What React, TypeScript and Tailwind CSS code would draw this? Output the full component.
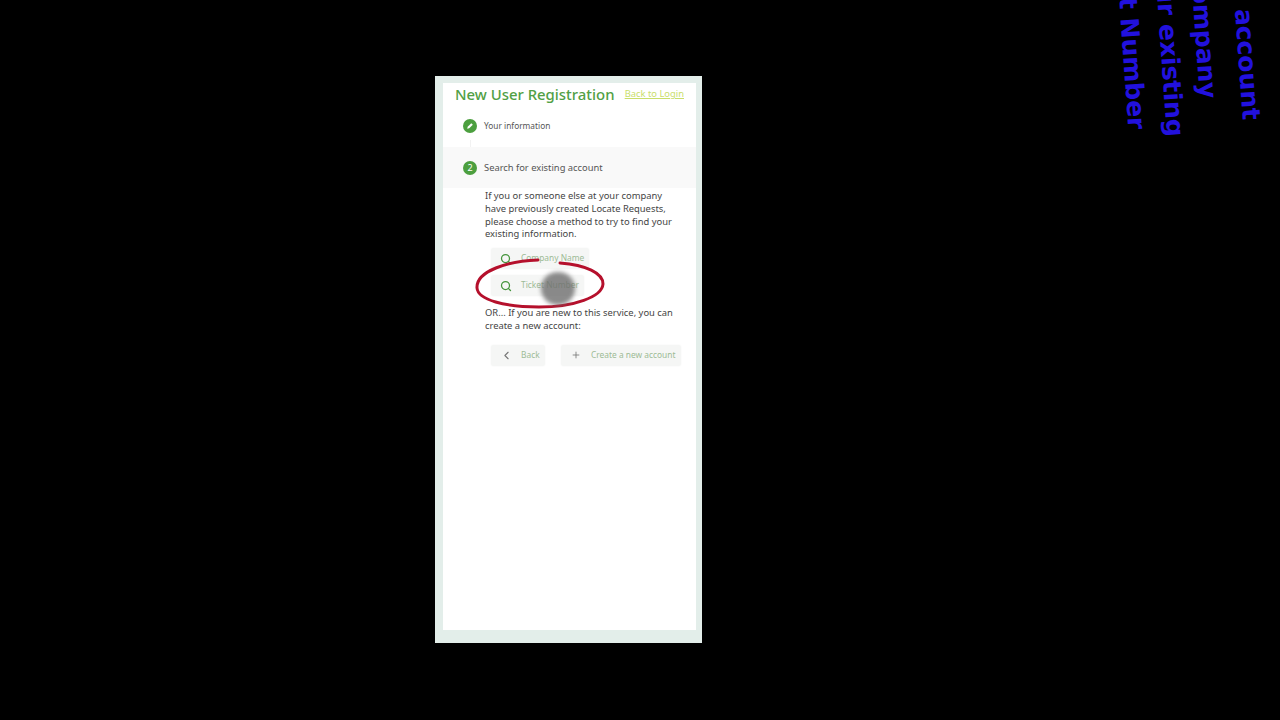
import { ChevronLeft, Plus, Search } from "lucide-react";

function ActionButton({ icon, label, className }: { icon: React.ReactNode; label: string; className: string }) {
  return (
    <div className={`flex h-[21px] shrink-0 items-center whitespace-nowrap rounded-[3px] bg-[#f5f6f5] text-[8.4px] text-[#9dbb95] shadow-[0_0_2px_rgba(0,0,0,0.06)] ${className}`}>
      <span className="flex w-[30px] shrink-0 justify-center text-[#45953c]">{icon}</span>
      <span>{label}</span>
    </div>
  );
}

const caption = "absolute origin-top-left rotate-[86deg] whitespace-nowrap font-['DejaVu_Sans',sans-serif] text-[25px] font-bold leading-none text-[#2211dd]";

export default function App() {
  return (
    <div className="relative h-[720px] w-[1280px] overflow-hidden bg-black font-['Noto_Sans','Open_Sans',sans-serif]">
      <div className="ml-[435px] pt-[76px]">
        <div className="h-[567px] w-[267px] bg-[#e3eeea] pb-[13px] pl-[8px] pr-[6px] pt-[7px]">
          <div className="h-full bg-white">
            <div className="flex items-center justify-between px-[12px]">
              <h1 className="text-[14.9px] font-medium leading-[23px] text-[#51a045]">New User Registration</h1>
              <a className="text-[9.4px] text-[#c9de6a] underline">Back to Login</a>
            </div>

            <div className="mt-[6px] flex h-[28px] items-center gap-[7px] pl-[20px]">
              <span className="flex h-[14px] w-[14px] items-center justify-center rounded-full bg-[#4c9f3f]">
                <svg viewBox="0 0 14 14" className="h-[14px] w-[14px]">
                  <path d="M4.2 9.8l.5-2 3.6-3.6 1.5 1.5-3.6 3.6z" fill="#fff" />
                </svg>
              </span>
              <span className="text-[8.3px] text-[#555]">Your information</span>
            </div>
            <div className="ml-[27px] h-[7px] w-px bg-[#f2f2f2]" />

            <div className="flex h-[41px] items-center gap-[7px] bg-[#f9f9f9] pl-[20px] pt-[1px]">
              <span className="flex h-[14px] w-[14px] items-center justify-center rounded-full bg-[#4c9f3f] text-[9px] text-white">2</span>
              <span className="text-[9.35px] text-[#555]">Search for existing account</span>
            </div>

            <div className="pl-[42px] pr-[20px] pt-[2px] text-[9.4px] leading-[12.8px] text-[#444]">
              <p>If you or someone else at your company have previously created Locate Requests, please choose a method to try to find your existing information.</p>
              <div className="mt-[7px] flex flex-col items-start gap-[6px] pl-[6px]">
                <ActionButton className="w-[98px]" icon={<Search size={12} strokeWidth={2.5} />} label="Company Name" />
                <ActionButton className="w-[93px]" icon={<Search size={12} strokeWidth={2.5} />} label="Ticket Number" />
              </div>
              <p className="mt-[11px]">OR... If you are new to this service, you can create a new account:</p>
              <div className="mt-[12px] flex gap-[16px] pl-[6px]">
                <ActionButton className="w-[54px]" icon={<ChevronLeft size={13} className="text-[#777]" />} label="Back" />
                <ActionButton className="w-[120px]" icon={<Plus size={10} className="text-[#777]" />} label="Create a new account" />
              </div>
            </div>
          </div>
        </div>
      </div>

      {/* annotation drawn over the video */}
      <svg className="absolute left-[470px] top-[250px]" width="140" height="70" viewBox="0 0 140 70">
        <path
          d="M68 10C38 11 6 21 7 38c1 12 28 19 62 19 35 0 63-10 64-23 0-11-17-19-43-21"
          fill="none"
          stroke="#b5102c"
          strokeWidth="3"
          strokeLinecap="round"
        />
      </svg>
      <div className="absolute left-[541px] top-[272px] h-[33px] w-[34px] rounded-full bg-[#6e6e6e]/80 blur-[2px]" />

      {/* rotated captions, top right */}
      <div className={`${caption} left-[1256px] top-[8px]`}>account</div>
      <div className={`${caption} left-[1212px] top-[-29px]`}>company</div>
      <div className={`${caption} left-[1175px] top-[-49px]`}>your existing</div>
      <div className={`${caption} left-[1135px] top-[-77px]`}>Ticket Number</div>
    </div>
  );
}
